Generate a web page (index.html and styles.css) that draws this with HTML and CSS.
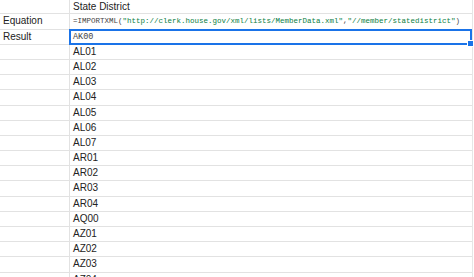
FILE: index.html
```html
<!DOCTYPE html>
<html lang="en">
<head>
<meta charset="UTF-8">
<title>IMPORTXML sheet</title>
<link rel="stylesheet" href="styles.css">
</head>
<body>
<div class="sheet">
  <div class="row head"><div class="label"></div><div class="cell">State District</div></div>
  <div class="row"><div class="label">Equation</div><div class="cell formula">=IMPORTXML(<span class="str">"http://clerk.house.gov/xml/lists/MemberData.xml"</span>,<span class="str">"//member/statedistrict"</span>)</div></div>
  <div class="row"><div class="label">Result</div><div class="cell active">AK00<span class="handle"></span></div></div>
  <div class="row"><div class="label"></div><div class="cell">AL01</div></div>
  <div class="row"><div class="label"></div><div class="cell">AL02</div></div>
  <div class="row"><div class="label"></div><div class="cell">AL03</div></div>
  <div class="row"><div class="label"></div><div class="cell">AL04</div></div>
  <div class="row"><div class="label"></div><div class="cell">AL05</div></div>
  <div class="row"><div class="label"></div><div class="cell">AL06</div></div>
  <div class="row"><div class="label"></div><div class="cell">AL07</div></div>
  <div class="row"><div class="label"></div><div class="cell">AR01</div></div>
  <div class="row"><div class="label"></div><div class="cell">AR02</div></div>
  <div class="row"><div class="label"></div><div class="cell">AR03</div></div>
  <div class="row"><div class="label"></div><div class="cell">AR04</div></div>
  <div class="row"><div class="label"></div><div class="cell">AQ00</div></div>
  <div class="row"><div class="label"></div><div class="cell">AZ01</div></div>
  <div class="row"><div class="label"></div><div class="cell">AZ02</div></div>
  <div class="row"><div class="label"></div><div class="cell">AZ03</div></div>
  <div class="row"><div class="label"></div><div class="cell">AZ04</div></div>
</div>
</body>
</html>
```

FILE: styles.css
```css
body {
  margin: 0;
  background: #fff;
  font-family: 'Liberation Sans', Arial, sans-serif;
  font-size: 10px;
  color: #222;
  overflow: hidden;
}
.sheet {
  width: 472px;
  border-right: 1px solid #e6e6e6;
}
.row {
  display: flex;
  height: 15.2px;
  box-sizing: border-box;
  border-bottom: 1px solid #e2e2e2;
}
.row.head {
  height: 14.4px;
}
.label {
  width: 70px;
  flex: none;
  box-sizing: border-box;
  border-right: 1px solid #e2e2e2;
  padding-left: 3px;
  line-height: 14px;
}
.cell {
  flex: 1;
  position: relative;
  padding-left: 3px;
  line-height: 14px;
  white-space: nowrap;
}
.formula {
  font-family: 'Liberation Mono', 'Courier New', monospace;
  font-size: 7.5px;
  color: #444;
}
.str {
  color: #0b8043;
}
.active {
  font-family: 'Liberation Mono', 'Courier New', monospace;
  font-size: 8.5px;
  color: #444;
}
.active::after {
  content: '';
  position: absolute;
  left: -1px;
  top: -1px;
  right: 0;
  bottom: -1px;
  border: 2px solid #1a73e8;
}
.handle {
  position: absolute;
  right: -2px;
  bottom: -3px;
  width: 5px;
  height: 5px;
  background: #1a73e8;
  border: 1px solid #fff;
  z-index: 1;
}
```
